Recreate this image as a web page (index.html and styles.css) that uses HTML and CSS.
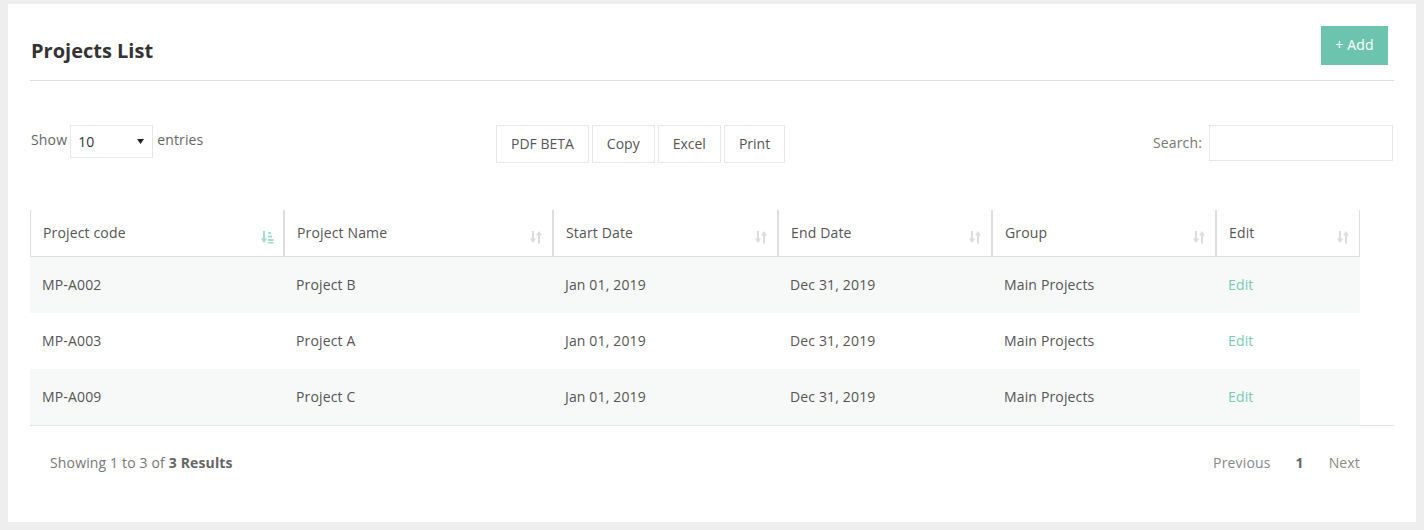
FILE: index.html
```html
<!DOCTYPE html>
<html lang="en">
<head>
<meta charset="utf-8">
<title>Projects List</title>
<link rel="stylesheet" href="styles.css">
</head>
<body>
<div class="card">
  <div class="card-header">
    <h1 class="title">Projects List</h1>
    <button class="btn-add">+ Add</button>
  </div>

  <div class="controls">
    <div class="length">
      <span>Show</span>
      <div class="select"><span>10</span><svg width="7" height="5" viewBox="0 0 7 5"><polygon points="0,0 7,0 3.5,5" fill="#222"/></svg></div>
      <span>entries</span>
    </div>
    <div class="exports">
      <button class="btn">PDF BETA</button>
      <button class="btn">Copy</button>
      <button class="btn">Excel</button>
      <button class="btn">Print</button>
    </div>
    <div class="search">
      <label>Search:</label>
      <div class="search-input"></div>
    </div>
  </div>

  <div class="table-wrap">
    <table class="grid">
      <colgroup>
        <col style="width:254px"><col style="width:269px"><col style="width:225px"><col style="width:214px"><col style="width:224px"><col style="width:144px">
      </colgroup>
      <thead>
        <tr>
          <th><div class="th-inner"><span>Project code</span>
            <svg class="sort" width="14" height="14" viewBox="0 0 14 14"><g fill="#a4dccd"><rect x="3" y="1" width="2" height="9"/><polygon points="1,8.5 7,8.5 4,13"/><rect x="8" y="2" width="3" height="2"/><rect x="8" y="5.5" width="4" height="2"/><rect x="8" y="9" width="5.5" height="2"/><rect x="8" y="12" width="5.5" height="1.5"/></g></svg></div></th>
          <th><div class="th-inner"><span>Project Name</span>
            <svg class="sort" width="14" height="14" viewBox="0 0 14 14"><g fill="#dcdcdc"><rect x="3" y="1" width="2" height="9"/><polygon points="1,8.5 7,8.5 4,13"/><rect x="9" y="4" width="2" height="9.5"/><polygon points="7,5.5 13,5.5 10,1"/></g></svg></div></th>
          <th><div class="th-inner"><span>Start Date</span>
            <svg class="sort" width="14" height="14" viewBox="0 0 14 14"><g fill="#dcdcdc"><rect x="3" y="1" width="2" height="9"/><polygon points="1,8.5 7,8.5 4,13"/><rect x="9" y="4" width="2" height="9.5"/><polygon points="7,5.5 13,5.5 10,1"/></g></svg></div></th>
          <th><div class="th-inner"><span>End Date</span>
            <svg class="sort" width="14" height="14" viewBox="0 0 14 14"><g fill="#dcdcdc"><rect x="3" y="1" width="2" height="9"/><polygon points="1,8.5 7,8.5 4,13"/><rect x="9" y="4" width="2" height="9.5"/><polygon points="7,5.5 13,5.5 10,1"/></g></svg></div></th>
          <th><div class="th-inner"><span>Group</span>
            <svg class="sort" width="14" height="14" viewBox="0 0 14 14"><g fill="#dcdcdc"><rect x="3" y="1" width="2" height="9"/><polygon points="1,8.5 7,8.5 4,13"/><rect x="9" y="4" width="2" height="9.5"/><polygon points="7,5.5 13,5.5 10,1"/></g></svg></div></th>
          <th><div class="th-inner"><span>Edit</span>
            <svg class="sort" width="14" height="14" viewBox="0 0 14 14"><g fill="#dcdcdc"><rect x="3" y="1" width="2" height="9"/><polygon points="1,8.5 7,8.5 4,13"/><rect x="9" y="4" width="2" height="9.5"/><polygon points="7,5.5 13,5.5 10,1"/></g></svg></div></th>
        </tr>
      </thead>
      <tbody>
        <tr class="odd">
          <td>MP-A002</td><td>Project B</td><td>Jan 01, 2019</td><td>Dec 31, 2019</td><td>Main Projects</td><td><a class="edit">Edit</a></td>
        </tr>
        <tr>
          <td>MP-A003</td><td>Project A</td><td>Jan 01, 2019</td><td>Dec 31, 2019</td><td>Main Projects</td><td><a class="edit">Edit</a></td>
        </tr>
        <tr class="odd">
          <td>MP-A009</td><td>Project C</td><td>Jan 01, 2019</td><td>Dec 31, 2019</td><td>Main Projects</td><td><a class="edit">Edit</a></td>
        </tr>
      </tbody>
    </table>
  </div>

  <div class="footer">
    <div class="info">Showing 1 to 3 of <b>3 Results</b></div>
    <div class="pager">
      <a class="page">Previous</a>
      <a class="page current">1</a>
      <a class="page">Next</a>
    </div>
  </div>
</div>
</body>
</html>
```

FILE: styles.css
```css
html, body {
  margin: 0;
  padding: 0;
}
body {
  background: #eeeeee;
  padding: 4px 8px 8px;
  font-family: "Open Sans", "Noto Sans", sans-serif;
  font-size: 14px;
  letter-spacing: 0.15px;
  color: #555;
}
.card {
  background: #fff;
  padding: 22px;
}
.card-header {
  display: flex;
  justify-content: space-between;
  align-items: flex-end;
  padding-bottom: 15px;
  border-bottom: 1px solid #e0e0e0;
}
.title {
  margin: 0 0 1px 1px;
  font-size: 20px;
  line-height: 26px;
  font-weight: 700;
  letter-spacing: 0;
  color: #333;
}
.btn-add {
  align-self: flex-start;
  height: 39px;
  width: 67px;
  margin-right: 6px;
  border: none;
  background: #6cc4af;
  color: #fff;
  font-family: inherit;
  font-size: 14px;
  letter-spacing: 0.15px;
  padding: 0 0 2px;
}
.controls {
  margin-top: 44px;
  display: grid;
  grid-template-columns: 466px 1fr 1fr;
  align-items: start;
}
.length {
  display: flex;
  align-items: flex-start;
  color: #666;
}
.length > span {
  line-height: 29px;
}
.length > span:first-child {
  margin-left: 1px;
}
.select {
  width: 83px;
  height: 33px;
  box-sizing: border-box;
  border: 1px solid #e6e6e6;
  margin: 0 4px 0 3px;
  display: flex;
  align-items: center;
  justify-content: space-between;
  padding: 0 8px 0 7px;
  color: #333;
}
.select svg {
  margin-top: -1px;
}
.exports {
  display: flex;
  gap: 3px;
}
.btn {
  height: 38px;
  box-sizing: border-box;
  border: 1px solid #e8e8e8;
  background: #fff;
  color: #555;
  font-family: inherit;
  font-size: 14px;
  letter-spacing: 0;
  padding: 0 14px 2px;
}
.search {
  display: flex;
  justify-content: flex-end;
  align-items: center;
  color: #777;
  margin-right: 1px;
}
.search label {
  margin-right: 7px;
  margin-bottom: 2px;
}
.search-input {
  width: 184px;
  height: 36px;
  box-sizing: border-box;
  border: 1px solid #e6e6e6;
}
.table-wrap {
  margin-top: 47px;
  border-bottom: 1px solid #e5e5e5;
}
.grid {
  width: 1330px;
  border-collapse: separate;
  border-spacing: 0;
  table-layout: fixed;
}
.grid th {
  height: 44px;
  padding: 0 9px 2px 12px;
  border-left: 1px solid #dedede;
  border-right: 1px solid #dedede;
  border-bottom: 1px solid #dedede;
  font-weight: 400;
  text-align: left;
  color: #555;
  box-sizing: content-box;
}
.th-inner {
  display: flex;
  justify-content: space-between;
  align-items: center;
}
.sort {
  margin-top: 9px;
  flex: none;
}
.grid td {
  height: 54px;
  padding: 0 12px 2px 11px;
  border-left: 1px solid transparent;
  border-right: 1px solid transparent;
  color: #555;
}
.grid tr.odd td {
  background: #f7f9f8;
}
.edit {
  color: #79cbb7;
}
.footer {
  display: flex;
  justify-content: space-between;
  align-items: center;
  padding: 27px 22px 27px 20px;
  line-height: 20px;
}
.info {
  color: #777;
}
.info b {
  color: #666;
}
.pager {
  display: flex;
}
.page {
  padding: 0 12px 0 13px;
  color: #888;
}
.page.current {
  font-weight: 700;
  color: #666;
}
```
